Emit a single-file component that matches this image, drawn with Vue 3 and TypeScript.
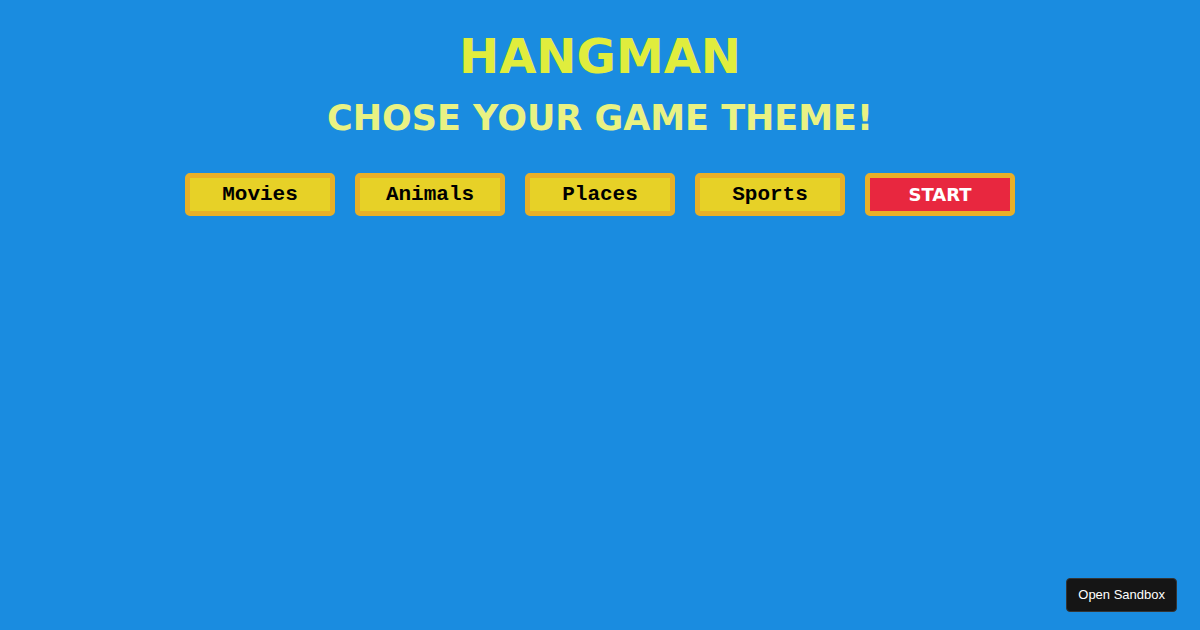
<script setup lang="ts">
const themes: string[] = ['Movies', 'Animals', 'Places', 'Sports']
</script>

<template>
  <main class="game">
    <h1 class="title">HANGMAN</h1>
    <h2 class="subtitle">CHOSE YOUR GAME THEME!</h2>
    <div class="options">
      <button v-for="theme in themes" :key="theme" type="button" class="option">{{ theme }}</button>
      <button type="button" class="option start">START</button>
    </div>
    <button type="button" class="sandbox">Open Sandbox</button>
  </main>
</template>

<style>
body {
  margin: 0;
  background: #1a8ce0;
}
</style>

<style scoped>
.game {
  display: flex;
  flex-direction: column;
  align-items: center;
  padding-top: 32px;
  font-family: "DejaVu Sans", Verdana, sans-serif;
  font-weight: 700;
  text-align: center;
}

.title {
  margin: 0;
  font-size: 48px;
  line-height: 48px;
  color: #e0ed3d;
}

.subtitle {
  margin: 20px 0 0;
  font-size: 35px;
  line-height: 36px;
  color: #e9f283;
}

.options {
  display: flex;
  flex-wrap: wrap;
  justify-content: center;
  gap: 20px;
  margin-top: 37px;
}

.option {
  width: 150px;
  padding: 6px 0;
  border: 5px solid #e9b028;
  border-radius: 5px;
  background: #e7d127;
  color: #000;
  font-family: "Liberation Mono", "Courier New", monospace;
  font-size: 21px;
  font-weight: 700;
  line-height: 21px;
  cursor: pointer;
}

.start {
  background: #e8273f;
  color: #fff;
  font-family: inherit;
  font-size: 18px;
}

.sandbox {
  position: fixed;
  right: 23px;
  bottom: 18px;
  padding: 8px 11px;
  border: 1px solid #343434;
  border-radius: 4px;
  background: #151515;
  color: #fff;
  font-family: "Liberation Sans", Arial, sans-serif;
  font-size: 13px;
  line-height: 16px;
  cursor: pointer;
}
</style>
